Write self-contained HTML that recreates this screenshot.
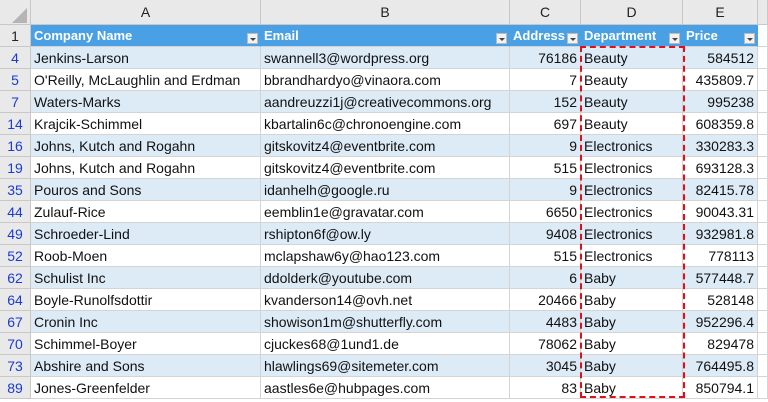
<!DOCTYPE html>
<html><head><style>
*{margin:0;padding:0;box-sizing:border-box}
body{width:768px;height:402px;background:#fff;font-family:"Liberation Sans",sans-serif;position:relative;overflow:hidden}
.c{position:absolute;height:22px;line-height:22px;font-size:14px;color:#111;white-space:nowrap;overflow:hidden;border-right:1px solid #d4d4d4;border-bottom:1px solid #d4d4d4;padding:0 3px}
.r{text-align:right}
.hd{background:#e9e9e9;color:#222;text-align:center;font-size:14px;border-right:1px solid #c8c8c8;border-bottom:1px solid #c8c8c8}
.rn{background:#e9e9e9;color:#1a3ccf;text-align:center;border-right:1px solid #c8c8c8;border-bottom:1px solid #c8c8c8;padding:0}
.th{background:#4aa0e4;color:#fff;font-weight:bold;font-size:13px;border-right:1px solid #4aa0e4}
.bl{background:#ddebf7}
.fb{position:absolute;width:11px;height:11px;background:#f2f2f2;border:1px solid #bbb}
.fb:after{content:"";position:absolute;left:2px;top:4px;border-left:3px solid transparent;border-right:3px solid transparent;border-top:3px solid #444}
.tri{position:absolute;left:12px;top:8px;width:0;height:0;border-left:15px solid transparent;border-bottom:15px solid #b5b5b5}
</style></head><body>
<script>
var X=[0,31,261,510,581,683,758];
var H=document.body;
function cell(x0,x1,y,h,cls,t){var d=document.createElement('div');d.className='c '+cls;d.style.left=x0+'px';d.style.top=y+'px';d.style.width=(x1-x0)+'px';d.style.height=h+'px';d.style.lineHeight=h+'px';d.textContent=t;H.appendChild(d);return d;}
cell(0,31,0,25,'hd','');
var t=document.createElement('div');t.className='tri';H.appendChild(t);
var L=['A','B','C','D','E'];
for(var i=0;i<5;i++)cell(X[i+1],X[i+2],0,25,'hd',L[i]);
cell(758,768,0,25,'hd','');
var rows=[["1","Company Name","Email","Address","Department","Price"],
["4","Jenkins-Larson","swannell3@wordpress.org","76186","Beauty","584512"],
["5","O'Reilly, McLaughlin and Erdman","bbrandhardyo@vinaora.com","7","Beauty","435809.7"],
["7","Waters-Marks","aandreuzzi1j@creativecommons.org","152","Beauty","995238"],
["14","Krajcik-Schimmel","kbartalin6c@chronoengine.com","697","Beauty","608359.8"],
["16","Johns, Kutch and Rogahn","gitskovitz4@eventbrite.com","9","Electronics","330283.3"],
["19","Johns, Kutch and Rogahn","gitskovitz4@eventbrite.com","515","Electronics","693128.3"],
["35","Pouros and Sons","idanhelh@google.ru","9","Electronics","82415.78"],
["44","Zulauf-Rice","eemblin1e@gravatar.com","6650","Electronics","90043.31"],
["49","Schroeder-Lind","rshipton6f@ow.ly","9408","Electronics","932981.8"],
["52","Roob-Moen","mclapshaw6y@hao123.com","515","Electronics","778113"],
["62","Schulist Inc","ddolderk@youtube.com","6","Baby","577448.7"],
["64","Boyle-Runolfsdottir","kvanderson14@ovh.net","20466","Baby","528148"],
["67","Cronin Inc","showison1m@shutterfly.com","4483","Baby","952296.4"],
["70","Schimmel-Boyer","cjuckes68@1und1.de","78062","Baby","829478"],
["73","Abshire and Sons","hlawlings69@sitemeter.com","3045","Baby","764495.8"],
["89","Jones-Greenfelder","aastles6e@hubpages.com","83","Baby","850794.1"]];
for(var r=0;r<rows.length;r++){
 var y=25+r*22;var row=rows[r];
 var rc=cell(0,31,y,22,'rn',row[0]); if(r==0)rc.style.color='#222';
 var bg=r==0?'th':(r%2==1?'bl':'');
 for(var i=1;i<=5;i++){
  var cls=bg+((r>0&&(i==3||i==5))?' r':'');
  cell(X[i],X[i+1],y,22,cls,row[i]);
 }
 cell(758,768,y,22,'','');
}
[261,510,581,683,758].forEach(function(x,i){var f=document.createElement('div');f.className='fb';f.style.left=(x-14)+'px';f.style.top='33px';H.appendChild(f);});
var d=document.createElement('div');d.style.cssText='position:absolute;left:580px;top:46px;width:105px;height:352px;border:2px dashed #e0101a;';H.appendChild(d);
</script>
</body></html>
